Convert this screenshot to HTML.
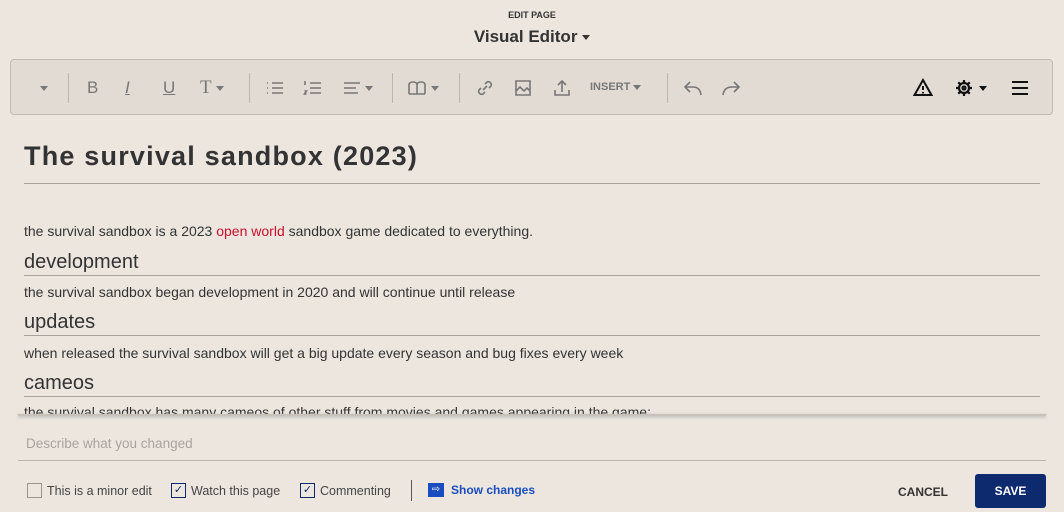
<!DOCTYPE html>
<html><head><style>
body{margin:0;width:1064px;height:512px;background:#ede6df;font-family:"Liberation Sans",sans-serif;position:relative;overflow:hidden;color:#3a3a3a}
.a{position:absolute}
.tb{left:10px;top:59px;width:1043px;height:56px;background:#e2dbd3;border:1px solid #c2bbb4;border-radius:4px;box-sizing:border-box}
.sep{position:absolute;top:73px;width:1px;height:30px;background:#bdb6ae}
.ic{position:absolute;top:78px;color:#777;font-size:17px}
svg.s{position:absolute;top:78px;width:20px;height:20px;fill:none;stroke:#777;stroke-width:1.6}
.car{display:inline-block;width:0;height:0;border-left:4px solid transparent;border-right:4px solid transparent;border-top:5px solid #777;vertical-align:middle}
.p{position:absolute;left:24px;font-size:14px;color:#333}
.h{position:absolute;left:24px;width:1016px;font-size:20px;color:#333;border-bottom:1px solid #a9a29b;padding-bottom:1px}
.cb{position:absolute;top:483px;width:15px;height:15px;box-sizing:border-box;border:1.5px solid #9a948e}
.cb.on{border-color:#0d2a6e;color:#0d2a6e;font-size:11px;line-height:12px;text-align:center}
.lb{position:absolute;top:484px;font-size:12.5px;color:#444}
</style></head><body>
<div class="a" style="left:0;top:10px;width:1064px;text-align:center;font-size:9px;font-weight:bold;color:#333">EDIT PAGE</div>
<div class="a" style="left:0;top:27px;width:1064px;text-align:center;font-size:17px;font-weight:bold;color:#333">Visual Editor <span class="car" style="border-top-color:#333"></span></div>
<div class="a tb"></div>
<span class="ic" style="left:40px"><span class="car"></span></span>
<div class="sep" style="left:68px"></div>
<span class="ic" style="left:87px">B</span>
<span class="ic" style="left:125px;font-style:italic;text-decoration:underline">I</span>
<span class="ic" style="left:163px;text-decoration:underline">U</span>
<span class="ic" style="left:200px;font-family:'Liberation Serif';font-size:19px;top:77px">T <span class="car"></span></span>
<div class="sep" style="left:249px"></div>
<svg class="s" style="left:265px" viewBox="0 0 20 20"><path d="M2 5h1M2 10h1M2 15h1M7 5h11M7 10h11M7 15h11"/></svg>
<svg class="s" style="left:303px" viewBox="0 0 20 20"><path d="M7 5h11M7 10h11M7 15h11M2 3v4M1.5 13h2l-2 3h2"/></svg>
<svg class="s" style="left:343px" viewBox="0 0 20 20"><path d="M1 5h16M1 10h12M1 15h14"/></svg><span class="ic" style="left:365px"><span class="car"></span></span>
<div class="sep" style="left:392px"></div>
<svg class="s" style="left:407px" viewBox="0 0 20 20"><path d="M2 16V7q0-3 4-3t4 3v9M10 7q0-3 4-3t4 3v9M2 16h16"/></svg><span class="ic" style="left:431px"><span class="car"></span></span>
<div class="sep" style="left:459px"></div>
<svg class="s" style="left:475px" viewBox="0 0 20 20"><path d="M8 12l4-4M6 10l-2 2a3 3 0 0 0 4 4l2-2M14 10l2-2a3 3 0 0 0-4-4l-2 2"/></svg>
<svg class="s" style="left:513px" viewBox="0 0 20 20"><path d="M3 3h14v14H3zM3 13l4-4 4 4 3-3 3 3"/></svg>
<svg class="s" style="left:552px" viewBox="0 0 20 20"><path d="M3 12v5h14v-5M10 14V3M6 7l4-4 4 4"/></svg>
<span class="ic" style="left:590px;top:81px;font-size:11px;font-weight:bold">INSERT <span class="car"></span></span>
<div class="sep" style="left:667px"></div>
<svg class="s" style="left:683px" viewBox="0 0 20 20"><path d="M7 4L2 9l5 5M2 9h8q7 0 8 8"/></svg>
<svg class="s" style="left:721px" viewBox="0 0 20 20"><path d="M13 4l5 5-5 5M18 9h-7q-8 0-9 8"/></svg>
<svg class="s" style="left:913px;stroke:#111;stroke-width:2" viewBox="0 0 20 20"><path d="M10 2L1.5 17h17zM10 8v4M10 14v1.5"/></svg>
<svg class="s" style="left:954px;stroke:#111;stroke-width:2.2" viewBox="0 0 20 20"><circle cx="10" cy="10" r="5"/><circle cx="10" cy="10" r="1.5"/><path d="M10 2v3M10 15v3M2 10h3M15 10h3M4.3 4.3l2 2M13.7 13.7l2 2M4.3 15.7l2-2M13.7 6.3l2-2"/></svg>
<span class="ic" style="left:979px"><span class="car" style="border-top-color:#111"></span></span>
<svg class="s" style="left:1010px;stroke:#111;stroke-width:2" viewBox="0 0 20 20"><path d="M2 4h16M2 10h16M2 16h16"/></svg>
<div class="a" style="left:24px;top:141px;font-size:27px;font-weight:bold;color:#333;letter-spacing:1.2px">The survival sandbox (2023)</div>
<div class="a" style="left:24px;top:183px;width:1016px;height:1px;background:#a9a29b"></div>
<div class="p" style="top:223px">the survival sandbox is a 2023 <span style="color:#c8102e">open world</span> sandbox game dedicated to everything.</div>
<div class="h" style="top:251px">development</div>
<div class="p" style="top:284px">the survival sandbox began development in 2020 and will continue until release</div>
<div class="h" style="top:311px">updates</div>
<div class="p" style="top:345px">when released the survival sandbox will get a big update every season and bug fixes every week</div>
<div class="h" style="top:372px">cameos</div>
<div class="p" style="top:404px;height:10px;overflow:hidden">the survival sandbox has many cameos of other stuff from movies and games appearing in the game:</div>
<div class="a" style="left:18px;top:414px;width:1028px;height:2px;background:#c9c2bb;box-shadow:0 1px 3px #aaa"></div>
<div class="a" style="left:26px;top:436px;font-size:13.5px;color:#aaa39d">Describe what you changed</div>
<div class="a" style="left:18px;top:460px;width:1028px;height:1px;background:#bdb6ae"></div>
<div class="cb" style="left:27px"></div><div class="lb" style="left:47px">This is a minor edit</div>
<div class="cb on" style="left:171px">✓</div><div class="lb" style="left:191px">Watch this page</div>
<div class="cb on" style="left:300px">✓</div><div class="lb" style="left:320px">Commenting</div>
<div class="a" style="left:411px;top:480px;width:1px;height:21px;background:#555"></div>
<div class="a" style="left:428px;top:483px;width:16px;height:14px;background:#1a4dbf;color:#fff;font-size:10px;text-align:center;line-height:14px">⇨</div>
<div class="a" style="left:451px;top:483px;font-size:12px;font-weight:bold;color:#1a4dbf">Show changes</div>
<div class="a" style="left:898px;top:485px;font-size:12px;font-weight:bold;color:#333">CANCEL</div>
<div class="a" style="left:975px;top:474px;width:71px;height:34px;background:#0d2a6e;border-radius:3px;color:#fff;font-size:12px;font-weight:bold;text-align:center;line-height:34px">SAVE</div>
</body></html>
